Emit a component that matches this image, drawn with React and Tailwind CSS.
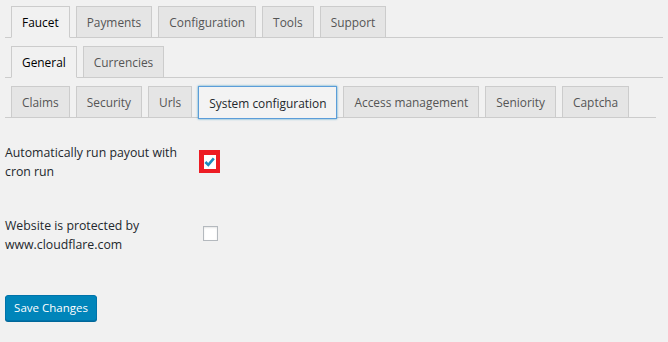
import React from 'react';

const rowOne = ['Faucet', 'Payments', 'Configuration', 'Tools', 'Support'];
const rowTwo = ['General', 'Currencies'];
const rowThree = ['Claims', 'Security', 'Urls', 'System configuration', 'Access management', 'Seniority', 'Captcha'];

function TabRow({ tabs, active, focused, className = '' }) {
  return (
    <div className={`flex items-end gap-[6px] border-b border-[#ccc] pl-[6px] ${className}`}>
      {tabs.map((t) => {
        if (t === focused) {
          return (
            <div
              key={t}
              className="-mb-[2px] h-[33px] shrink-0 whitespace-nowrap border border-[#5b9dd9] bg-[#f3f3f3] px-[10px] leading-[32px] text-[#23282d] shadow-[0_0_2px_rgba(30,140,190,0.8)]"
            >
              {t}
            </div>
          );
        }
        const on = t === active;
        return (
          <div
            key={t}
            className={`-mb-px h-[32px] shrink-0 whitespace-nowrap border border-[#ccc] px-[10px] leading-[31px] ${
              on ? 'border-b-[#f1f1f1] bg-[#f1f1f1] text-[#000]' : 'bg-[#e5e5e5] text-[#555]'
            }`}
          >
            {t}
          </div>
        );
      })}
    </div>
  );
}

export default function App() {
  return (
    <div className="min-h-screen bg-[#f1f1f1] pl-[5px] pt-[6px] font-['Open_Sans',sans-serif] text-[11.9px] text-[#23282d]">
      <TabRow tabs={rowOne} active="Faucet" className="mr-[5px]" />
      <TabRow tabs={rowTwo} active="General" className="mr-[5px] mt-[8px]" />
      <TabRow tabs={rowThree} focused="System configuration" className="mr-[12px] mt-[8px]" />

      <div className="mt-[25px] text-[12.3px]">
        <div className="flex items-start">
          <div className="w-[194px] leading-[19px]">Automatically run payout with cron run</div>
          <span className="mt-[7px] flex h-[23px] w-[21px] items-center justify-center bg-[#ed1c24]">
            <span className="flex h-[14px] w-[12px] items-center justify-center bg-white">
              <svg width="11" height="10" viewBox="0 0 11 10">
                <path d="M1.4 5 L4.3 7.9 L9.8 1.4" fill="none" stroke="#1e8cbe" strokeWidth="2.6" />
              </svg>
            </span>
          </span>
        </div>

        <div className="mt-[35px] flex items-start">
          <div className="w-[198px] leading-[19px]">Website is protected by www.cloudflare.com</div>
          <span className="mt-[10px] h-[15px] w-[15px] border border-[#b4b9be] bg-white shadow-[inset_0_1px_2px_rgba(0,0,0,0.1)]" />
        </div>

        <button className="mt-[41px] h-[26px] w-[92px] rounded-[3px] border border-[#0073aa] bg-[#0085ba] text-center text-[11.5px] leading-[24px] text-white shadow-[0_1px_0_#006799]">
          Save Changes
        </button>
      </div>
    </div>
  );
}
